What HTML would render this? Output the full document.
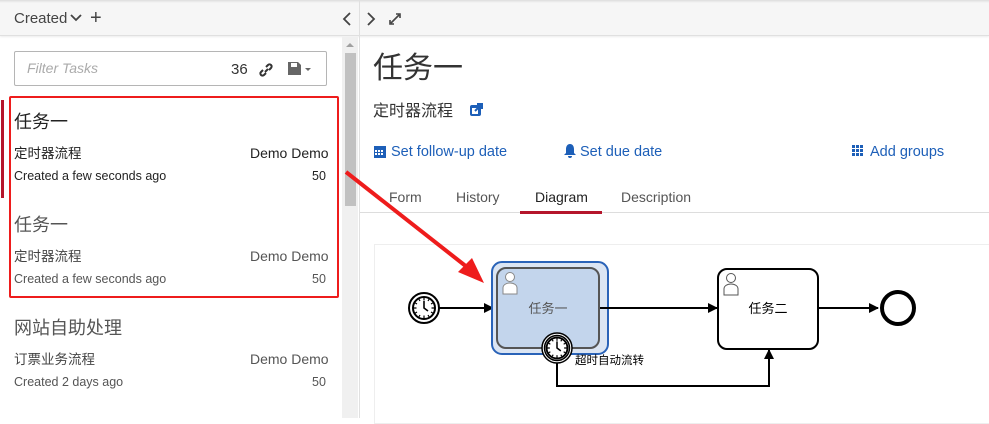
<!DOCTYPE html>
<html><head><meta charset="utf-8"><style>
*{box-sizing:border-box;margin:0;padding:0}
body{width:989px;height:418px;overflow:hidden;background:#fff;font-family:"Liberation Sans","Noto Sans CJK SC",sans-serif;position:relative;color:#333}
.a{position:absolute;white-space:nowrap;line-height:1.15}
.cjk{font-family:"Noto Sans CJK SC","Liberation Sans",sans-serif;line-height:1.1}
.blue{color:#1d5fb8}
</style></head><body>
<div class="a" style="left:0;top:0;width:989px;height:36px;background:#f6f6f6;border-bottom:1px solid #e0e0e0;box-shadow:0 1px 2px rgba(0,0,0,.08)"></div>
<div class="a" style="left:0;top:0;width:989px;height:3px;background:linear-gradient(#ddd,#f6f6f6)"></div>
<div class="a" style="left:14px;top:10px;font-size:15px;color:#444">Created<svg width="14" height="10" viewBox="0 0 14 10" style="margin-left:2px"><path d="M2 2l5 5 5-5" stroke="#444" stroke-width="1.8" fill="none"/></svg></div>
<div class="a" style="left:90px;top:7px;font-size:20px;color:#444">+</div>
<svg class="a" style="left:341px;top:11px" width="12" height="16"><path d="M9 2L3 8l6 6" stroke="#444" stroke-width="1.8" fill="none"/></svg>
<div class="a" style="left:359px;top:0;width:1px;height:418px;background:#e0e0e0"></div>
<svg class="a" style="left:365px;top:11px" width="12" height="16"><path d="M3 2l6 6-6 6" stroke="#444" stroke-width="1.8" fill="none"/></svg>
<svg class="a" style="left:387px;top:11px" width="16" height="16"><path d="M4 12L12 4M9 3h4v4M3 9v4h4" stroke="#444" stroke-width="1.6" fill="none"/></svg>

<div class="a" style="left:342px;top:37px;width:16px;height:381px;background:#f0f0f0"></div>
<div class="a" style="left:345px;top:53px;width:11px;height:153px;background:#c1c1c1"></div>
<svg class="a" style="left:346px;top:42px" width="8" height="6"><path d="M0 5L4 1 8 5z" fill="#a0a0a0"/></svg>

<div class="a" style="left:14px;top:51px;width:313px;height:35px;border:1px solid #b5b5b5;border-radius:2px"></div>
<div class="a" style="left:27px;top:60px;font-size:14px;font-style:italic;color:#aaa">Filter Tasks</div>
<div class="a" style="left:231px;top:61px;font-size:15px;color:#333">36</div>
<svg class="a" style="left:258px;top:62px" width="16" height="16"><path d="M7 10l3-3M5 8L3 10a2 2 0 003 3l2-2M11 8l2-2a2 2 0 00-3-3L8 5" stroke="#333" stroke-width="2" fill="none"/></svg>
<svg class="a" style="left:288px;top:62px" width="28" height="14"><path d="M0 0h10l3 3v10H0z" fill="#666"/><rect x="3" y="1" width="6" height="4" fill="#fff"/><path d="M17 6h6l-3 3z" fill="#666"/></svg>

<div class="a" style="left:1px;top:100px;width:3px;height:98px;background:#b5152b"></div>
<div class="a" style="left:9px;top:96px;width:330px;height:202px;border:2px solid #ee1c1c;border-radius:2px"></div>

<div class="a cjk" style="left:14px;top:112px;font-size:18px;color:#222">任务一</div>
<div class="a cjk" style="left:14px;top:145px;font-size:13.5px;color:#222">定时器流程</div>
<div class="a" style="left:250px;top:145px;font-size:14px;color:#222">Demo Demo</div>
<div class="a" style="left:14px;top:169px;font-size:12.5px;color:#222">Created a few seconds ago</div>
<div class="a" style="left:312px;top:169px;font-size:12.5px;color:#222">50</div>

<div class="a cjk" style="left:14px;top:215px;font-size:18px;color:#555">任务一</div>
<div class="a cjk" style="left:14px;top:248px;font-size:13.5px;color:#444">定时器流程</div>
<div class="a" style="left:250px;top:248px;font-size:14px;color:#555">Demo Demo</div>
<div class="a" style="left:14px;top:272px;font-size:12.5px;color:#555">Created a few seconds ago</div>
<div class="a" style="left:312px;top:272px;font-size:12.5px;color:#555">50</div>

<div class="a cjk" style="left:14px;top:318px;font-size:18px;color:#555">网站自助处理</div>
<div class="a cjk" style="left:14px;top:351px;font-size:13.5px;color:#444">订票业务流程</div>
<div class="a" style="left:250px;top:351px;font-size:14px;color:#555">Demo Demo</div>
<div class="a" style="left:14px;top:375px;font-size:12.5px;color:#555">Created 2 days ago</div>
<div class="a" style="left:312px;top:375px;font-size:12.5px;color:#555">50</div>

<div class="a cjk" style="left:373px;top:49px;font-size:30px;color:#333">任务一</div>
<div class="a cjk" style="left:373px;top:101px;font-size:16px;color:#333">定时器流程</div>
<svg class="a" style="left:469px;top:103px" width="14" height="14"><rect x="1" y="2" width="11" height="11" rx="2" fill="#1d5fb8"/><rect x="3" y="5" width="6" height="6" fill="#fff"/><path d="M6 8l6-6M8 1h5v5" stroke="#1d5fb8" stroke-width="2" fill="none"/></svg>

<svg class="a" style="left:373px;top:144px" width="14" height="15"><rect x="1" y="2" width="12" height="12" fill="#1d5fb8"/><g fill="#fff"><rect x="2" y="6" width="2" height="2"/><rect x="5" y="6" width="2" height="2"/><rect x="8" y="6" width="2" height="2"/><rect x="2" y="9" width="2" height="2"/><rect x="5" y="9" width="2" height="2"/><rect x="8" y="9" width="2" height="2"/></g></svg>
<div class="a blue" style="left:391px;top:144px;font-size:14.5px">Set follow-up date</div>
<svg class="a" style="left:563px;top:143px" width="14" height="16"><path d="M7 1c-3 0-4 3-4 5v4l-2 2h12l-2-2V6c0-2-1-5-4-5zM5 13a2 2 0 004 0z" fill="#1d5fb8"/></svg>
<div class="a blue" style="left:580px;top:144px;font-size:14.5px">Set due date</div>
<svg class="a" style="left:851px;top:144px" width="14" height="14"><g fill="#1d5fb8"><rect x="1" y="1" width="3" height="3"/><rect x="5" y="1" width="3" height="3"/><rect x="9" y="1" width="3" height="3"/><rect x="1" y="5" width="3" height="3"/><rect x="5" y="5" width="3" height="3"/><rect x="9" y="5" width="3" height="3"/><rect x="1" y="9" width="3" height="3"/><rect x="5" y="9" width="3" height="3"/><rect x="9" y="9" width="3" height="3"/></g></svg>
<div class="a blue" style="left:870px;top:144px;font-size:14.5px">Add groups</div>

<div class="a" style="left:389px;top:189px;font-size:14px;color:#555">Form</div>
<div class="a" style="left:456px;top:189px;font-size:14px;color:#555">History</div>
<div class="a" style="left:535px;top:189px;font-size:14px;color:#222">Diagram</div>
<div class="a" style="left:621px;top:189px;font-size:14px;color:#555">Description</div>
<div class="a" style="left:360px;top:212px;width:629px;height:1px;background:#ddd"></div>
<div class="a" style="left:520px;top:211px;width:82px;height:3px;background:#b5152b"></div>

<div class="a" style="left:374px;top:244px;width:620px;height:180px;border:1px solid #eee"></div>

<svg class="a" style="left:0;top:0" width="989" height="418" viewBox="0 0 989 418">
<defs><marker id="ar" markerWidth="10" markerHeight="10" refX="9" refY="5" orient="auto" markerUnits="userSpaceOnUse"><path d="M0 0L10 5 0 10z" fill="#000"/></marker>
<g id="clk"><circle r="11" fill="#fff" stroke="#000" stroke-width="2"/><g stroke="#000" stroke-width="1.2"><path d="M0 -10V-7.5M0 10V7.5M-10 0H-7.5M10 0H7.5M5 -8.7l-1 1.7M-5 8.7l1-1.7M8.7 5l-1.7-1M-8.7 -5l1.7 1M-5 -8.7l1 1.7M5 8.7l-1-1.7M-8.7 5l1.7-1M8.7 -5l-1.7 1"/></g><path d="M0 -7V0L4 3" stroke="#000" stroke-width="1.6" fill="none"/></g></defs>
<circle cx="424" cy="308" r="15" fill="#fff" stroke="#000" stroke-width="2"/>
<use href="#clk" x="424" y="308"/>
<path d="M439 308H493" stroke="#000" stroke-width="2" marker-end="url(#ar)"/>
<rect x="492" y="262" width="116" height="92" rx="10" fill="#dbe5f3" stroke="#2a63b8" stroke-width="2"/>
<rect x="497" y="268" width="102" height="80" rx="9" fill="#c3d5ec" stroke="#555" stroke-width="2"/>
<g transform="translate(510,280)" stroke="#888" fill="#fff" stroke-width="1"><path d="M-7 14v-6c0-3 3-5 7-5s7 2 7 5v6z"/><circle r="4.5" cy="-3"/></g>
<text x="548" y="313" font-size="13" fill="#555" text-anchor="middle" font-family="Noto Sans CJK SC,sans-serif">任务一</text>
<path d="M600 308H717" stroke="#000" stroke-width="2" marker-end="url(#ar)"/>
<rect x="718" y="269" width="100" height="80" rx="9" fill="#fff" stroke="#000" stroke-width="2"/>
<g transform="translate(731,281)" stroke="#555" fill="#fff" stroke-width="1"><path d="M-7 14v-6c0-3 3-5 7-5s7 2 7 5v6z"/><circle r="4.5" cy="-3"/></g>
<text x="768" y="313" font-size="13" fill="#000" text-anchor="middle" font-family="Noto Sans CJK SC,sans-serif">任务二</text>
<path d="M818 308H878" stroke="#000" stroke-width="2" marker-end="url(#ar)"/>
<circle cx="898" cy="308" r="16" fill="#fff" stroke="#000" stroke-width="4"/>
<path d="M557 362V386H769V350" stroke="#000" stroke-width="2" fill="none" marker-end="url(#ar)"/>
<circle cx="557" cy="348" r="15" fill="#fff" stroke="#000" stroke-width="1.5"/>
<circle cx="557" cy="348" r="12.5" fill="#fff" stroke="#000" stroke-width="1.5"/>
<g transform="translate(557,348) scale(0.95)"><use href="#clk"/></g>
<text x="575" y="364" font-size="11.5" fill="#000" font-family="Noto Sans CJK SC,sans-serif">超时自动流转</text>
<path d="M346 172L472 271" stroke="#ee1c1c" stroke-width="4" fill="none"/>
<path d="M484 283L458 272L472 258z" fill="#ee1c1c"/>
</svg>
</body></html>
